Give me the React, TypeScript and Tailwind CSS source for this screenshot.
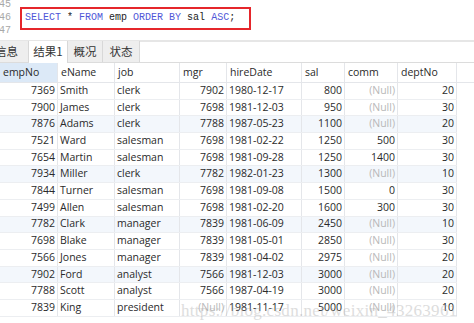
import React from 'react';

type Row = [number, string, string, number | null, string, number, number | null, number];

const rows: Row[] = [
  [7369, 'Smith', 'clerk', 7902, '1980-12-17', 800, null, 20],
  [7900, 'James', 'clerk', 7698, '1981-12-03', 950, null, 30],
  [7876, 'Adams', 'clerk', 7788, '1987-05-23', 1100, null, 20],
  [7521, 'Ward', 'salesman', 7698, '1981-02-22', 1250, 500, 30],
  [7654, 'Martin', 'salesman', 7698, '1981-09-28', 1250, 1400, 30],
  [7934, 'Miller', 'clerk', 7782, '1982-01-23', 1300, null, 10],
  [7844, 'Turner', 'salesman', 7698, '1981-09-08', 1500, 0, 30],
  [7499, 'Allen', 'salesman', 7698, '1981-02-20', 1600, 300, 30],
  [7782, 'Clark', 'manager', 7839, '1981-06-09', 2450, null, 10],
  [7698, 'Blake', 'manager', 7839, '1981-05-01', 2850, null, 30],
  [7566, 'Jones', 'manager', 7839, '1981-04-02', 2975, null, 20],
  [7902, 'Ford', 'analyst', 7566, '1981-12-03', 3000, null, 20],
  [7788, 'Scott', 'analyst', 7566, '1987-04-19', 3000, null, 20],
  [7839, 'King', 'president', null, '1981-11-17', 5000, null, 10],
];

const cols = [
  { name: 'empNo', w: 'w-[58px]' },
  { name: 'eName', w: 'w-[57px]' },
  { name: 'job', w: 'w-[65px]' },
  { name: 'mgr', w: 'w-[47px]' },
  { name: 'hireDate', w: 'w-[75px]' },
  { name: 'sal', w: 'w-[43px]' },
  { name: 'comm', w: 'w-[53px]' },
  { name: 'deptNo', w: 'w-[59px]' },
];

function Kw({ children }: { children: React.ReactNode }) {
  return <span className="text-[#4f56d8]">{children}</span>;
}

function Cell({ w, right, children }: { w: string; right?: boolean; children: React.ReactNode }) {
  return (
    <div className={`${w} shrink-0 h-full flex items-center px-[2px] border-r border-[#e4e6ea] ${right ? 'justify-end' : ''}`}>
      {children}
    </div>
  );
}

const Null = () => <span className="text-[#b8b8b8]">(Null)</span>;

export default function App() {
  return (
    <div className="relative w-[474px] h-[323px] overflow-hidden bg-white">
      {/* editor */}
      <div className="h-[41px] font-['Liberation_Mono',monospace] text-[10px] leading-[12.5px]">
        <div className="flex -mt-[1px]">
          <div className="w-[11px] overflow-hidden flex justify-end text-[#a8a8a8]">45</div>
        </div>
        <div className="flex items-center h-[12.5px] mt-[0.5px]">
          <div className="w-[11px] overflow-hidden flex justify-end text-[#a8a8a8]">46</div>
          <div className="ml-[14px] text-[#222] whitespace-pre">
            <Kw>SELECT</Kw> * <Kw>FROM</Kw> emp <Kw>ORDER</Kw> <Kw>BY</Kw> sal <Kw>ASC</Kw>;
          </div>
        </div>
        <div className="flex">
          <div className="w-[11px] overflow-hidden flex justify-end text-[#a8a8a8]">47</div>
        </div>
      </div>
      {/* red annotation box */}
      <div className="absolute left-[20px] top-[7px] w-[231px] h-[23px] border-2 border-[#e5262b]" />

      {/* tabs */}
      <div className="h-[23px] border-t-2 border-[#e6e6e6] flex items-end font-['Noto_Sans_CJK_SC',sans-serif] text-[11.5px] text-[#333] border-b border-b-[#dcdcdc]">
        <div className="w-[29px] h-[21px] bg-[#eeeeee] border-r border-[#d8d8d8] flex items-center justify-end pr-[10px] overflow-hidden whitespace-nowrap">信息</div>
        <div className="w-[39px] h-[22px] bg-white border-r border-[#d8d8d8] flex items-center justify-center -mb-px">结果1</div>
        <div className="w-[35px] h-[21px] bg-[#eeeeee] border-r border-[#d8d8d8] flex items-center justify-center">概况</div>
        <div className="w-[37px] h-[21px] bg-[#eeeeee] border-r border-[#d8d8d8] flex items-center justify-center">状态</div>
      </div>

      {/* grid */}
      <div className="font-['Open_Sans','Noto_Sans_CJK_SC',sans-serif] text-[10.5px] text-[#2a2a2a]">
        <div className="flex h-[20px] border-b border-[#e4e6ea]">
          {cols.map((c, i) => (
            <div
              key={c.name}
              className={`${c.w} shrink-0 h-full flex items-center px-[3px] border-r border-[#e4e6ea] ${i === 0 ? 'bg-[#dce9f7]' : ''}`}
            >
              {c.name}
            </div>
          ))}
        </div>
        {rows.map((r, i) => (
          <div
            key={r[0]}
            className={`flex h-[16.7px] border-b border-[#eceef1] w-[457px] ${i % 3 === 2 ? 'bg-[#f3f7fc]' : ''}`}
          >
            <Cell w={cols[0].w} right>{r[0]}</Cell>
            <Cell w={cols[1].w}>{r[1]}</Cell>
            <Cell w={cols[2].w}>{r[2]}</Cell>
            <Cell w={cols[3].w} right>{r[3] === null ? <Null /> : r[3]}</Cell>
            <Cell w={cols[4].w}>{r[4]}</Cell>
            <Cell w={cols[5].w} right>{r[5]}</Cell>
            <Cell w={cols[6].w} right>{r[6] === null ? <Null /> : r[6]}</Cell>
            <Cell w={cols[7].w} right>{r[7]}</Cell>
          </div>
        ))}
      </div>

      {/* watermark */}
      <div className="absolute left-[181px] top-[298px] font-['Liberation_Serif',serif] text-[17px] text-[#a0a0a0] opacity-35 whitespace-nowrap tracking-[0.3px] pointer-events-none">
        https://blog.csdn.net/weixin_43263961
      </div>
    </div>
  );
}
